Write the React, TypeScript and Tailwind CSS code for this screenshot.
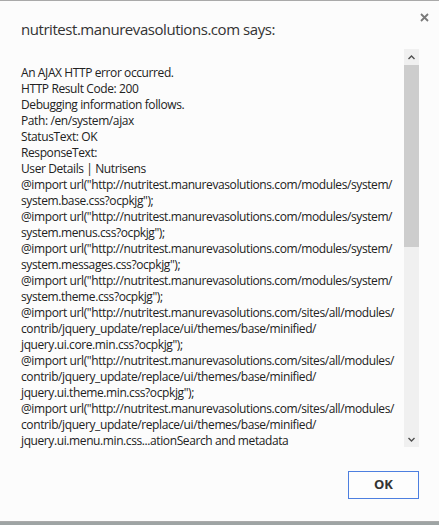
import React from 'react'

const lines = [
  '',
  'An AJAX HTTP error occurred.',
  'HTTP Result Code: 200',
  'Debugging information follows.',
  'Path: /en/system/ajax',
  'StatusText: OK',
  'ResponseText:',
  'User Details | Nutrisens',
  '@import url("http://nutritest.manurevasolutions.com/modules/system/',
  'system.base.css?ocpkjg");',
  '@import url("http://nutritest.manurevasolutions.com/modules/system/',
  'system.menus.css?ocpkjg");',
  '@import url("http://nutritest.manurevasolutions.com/modules/system/',
  'system.messages.css?ocpkjg");',
  '@import url("http://nutritest.manurevasolutions.com/modules/system/',
  'system.theme.css?ocpkjg");',
  '@import url("http://nutritest.manurevasolutions.com/sites/all/modules/',
  'contrib/jquery_update/replace/ui/themes/base/minified/',
  'jquery.ui.core.min.css?ocpkjg");',
  '@import url("http://nutritest.manurevasolutions.com/sites/all/modules/',
  'contrib/jquery_update/replace/ui/themes/base/minified/',
  'jquery.ui.theme.min.css?ocpkjg");',
  '@import url("http://nutritest.manurevasolutions.com/sites/all/modules/',
  'contrib/jquery_update/replace/ui/themes/base/minified/',
  'jquery.ui.menu.min.css...ationSearch and metadata',
]

export default function App() {
  return (
    <div className="w-[439px] h-[525px] flex flex-col bg-[#9ea4a4] font-['Open_Sans',sans-serif]">
      <div className="relative flex-1 flex flex-col bg-[#fcfcfc] border-t border-b border-[#a9a9a9]">
        {/* Close */}
        <button className="absolute top-[9px] right-[8px] w-[14px] h-[14px] flex items-center justify-center">
          <svg width="9" height="9" viewBox="0 0 9 9">
            <path d="M1 1 L8 8 M8 1 L1 8" stroke="#7a7a7a" strokeWidth="1.8" />
          </svg>
        </button>

        {/* Title */}
        <div className="pl-[21px] pt-[17px] h-[48px] text-[15px] leading-[22px] tracking-[-0.45px] text-[#333]">
          nutritest.manurevasolutions.com says:
        </div>

        {/* Message */}
        <div className="ml-[21px] w-[398px] h-[398px] flex">
          <div className="flex-1 text-[12px] leading-[16px] text-[#222] tracking-[-0.4px]">
            {lines.map((l, i) => (
              <div key={i} className="h-[16px] whitespace-pre">{l}</div>
            ))}
          </div>
          <div className="w-[15px] flex flex-col bg-[#f0f0f0]">
            <div className="h-[16px] flex items-center justify-center">
              <svg width="7" height="5" viewBox="0 0 7 5">
                <path d="M0.5 4 L3.5 1 L6.5 4" stroke="#505050" strokeWidth="1.4" fill="none" />
              </svg>
            </div>
            <div className="h-[182px] bg-[#cdcdcd]" />
            <div className="flex-1" />
            <div className="h-[16px] flex items-center justify-center">
              <svg width="7" height="5" viewBox="0 0 7 5">
                <path d="M0.5 1 L3.5 4 L6.5 1" stroke="#505050" strokeWidth="1.4" fill="none" />
              </svg>
            </div>
          </div>
        </div>

        {/* Buttons */}
        <div className="flex justify-end pr-[20px] pt-[24px]">
          <button className="w-[71px] h-[28px] border border-[#4d7fe0] bg-[#fdfdfd] text-[13px] font-bold text-[#333]">
            OK
          </button>
        </div>
      </div>
      <div className="h-[3px]" />
    </div>
  )
}
